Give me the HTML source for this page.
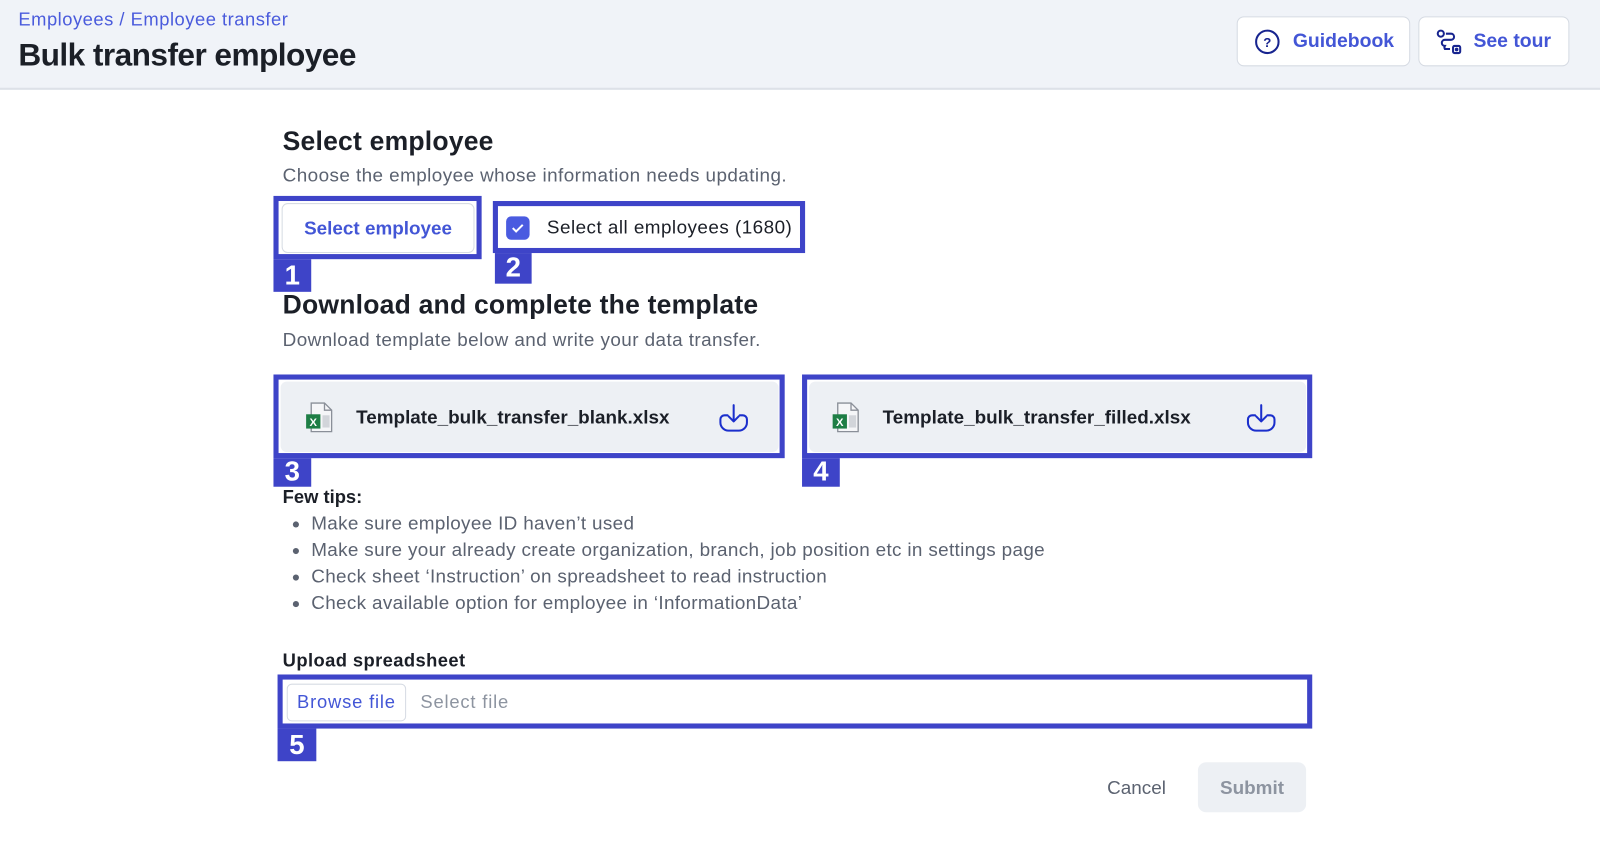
<!DOCTYPE html>
<html><head><meta charset="utf-8">
<style>
*{box-sizing:border-box;margin:0;padding:0}
body{width:1600px;height:852px;background:#fff;font-family:"Liberation Sans",sans-serif;position:relative;overflow:hidden;color:#1b1f27}
.w{position:absolute;left:0;top:0;width:1568px;height:835px;transform:scale(1.0204);transform-origin:0 0}
.a{position:absolute}
.hdr{left:0;top:0;width:1568px;height:88px;background:#f0f3f8;border-bottom:2px solid #dde1e8}
.bc{left:18px;top:9px;font-size:18px;color:#4a5bdc;letter-spacing:0.5px}
.tt{left:18px;top:36px;font-size:31px;font-weight:bold;color:#1b1f27;letter-spacing:-0.55px}
.hb{top:16px;height:49px;background:#fff;border:1.5px solid #d6dbe3;border-radius:7px;color:#4356d6;font-size:19px;font-weight:bold;display:flex;align-items:center}
.ann{border:5px solid #3e44c8}
.lab{background:#3e44c8;color:#fff;font-weight:bold;font-size:27px;text-align:center;line-height:32px}
.h2{font-size:26px;font-weight:bold;color:#1b1f27;letter-spacing:0.2px}
.sub{font-size:18.5px;color:#5b6270;letter-spacing:0.42px}
.tpl{background:#edf0f4;border-radius:6px;display:flex;align-items:center;font-size:18.5px;font-weight:bold;color:#1b1f27}
li{font-size:18.5px;color:#5b6270;line-height:26px;margin-left:28px;letter-spacing:0.33px}
</style></head><body><div class="w">
<div class="a hdr"></div>
<div class="a bc">Employees / Employee transfer</div>
<div class="a tt">Bulk transfer employee</div>
<div class="a hb" style="left:1212px;width:170px;padding-left:16px">
<svg width="26" height="26" viewBox="0 0 26 26"><circle cx="13" cy="13" r="11" fill="none" stroke="#17248f" stroke-width="2"/><text x="13" y="18" font-size="13" font-weight="bold" text-anchor="middle" fill="#17248f" font-family="Liberation Sans">?</text></svg>
<span style="margin-left:12px">Guidebook</span></div>
<div class="a hb" style="left:1390px;width:148px;padding-left:16px">
<svg width="26" height="26" viewBox="0 0 26 26" fill="none" stroke="#17248f" stroke-width="2"><circle cx="5" cy="5" r="3"/><rect x="17" y="17" width="7" height="7" rx="1.5"/><circle cx="20.5" cy="20.5" r="0.8" fill="#17248f"/><path d="M10 5h5a3 3 0 0 1 0 6h-6a3 3 0 0 0 0 6v0a3 3 0 0 0 0 3h5"/></svg>
<span style="margin-left:11px">See tour</span></div>

<div class="a h2" style="left:277px;top:123px">Select employee</div>
<div class="a sub" style="left:277px;top:161px">Choose the employee whose information needs updating.</div>

<div class="a ann" style="left:268px;top:192px;width:204px;height:62px"></div>
<div class="a" style="left:276px;top:199px;width:189px;height:49px;border:1.5px solid #d6dbe3;border-radius:6px;color:#4356d6;font-size:18.5px;font-weight:bold;display:flex;align-items:center;justify-content:center">Select employee</div>
<div class="a lab" style="left:268px;top:254px;width:37px;height:32px">1</div>

<div class="a ann" style="left:483px;top:197px;width:306px;height:51px"></div>
<div class="a" style="left:496px;top:212px;width:23px;height:23px;background:#4a5be0;border-radius:5px"><svg width="23" height="23" viewBox="0 0 23 23"><path d="M6.5 11.5l3.3 3.3 6.5-6.5" fill="none" stroke="#fff" stroke-width="2"/></svg></div>
<div class="a" style="left:536px;top:212px;font-size:18.5px;color:#1b1f27;letter-spacing:0.45px">Select all employees (1680)</div>
<div class="a lab" style="left:485px;top:248px;width:36px;height:30px;line-height:28px">2</div>

<div class="a h2" style="left:277px;top:283px">Download and complete the template</div>
<div class="a sub" style="left:277px;top:322px">Download template below and write your data transfer.</div>

<div class="a ann" style="left:268px;top:367px;width:501px;height:82px"></div>
<div class="a tpl" style="left:275px;top:374px;width:488px;height:69px;padding-left:24px">
<svg width="30" height="32" viewBox="0 0 30 32"><path d="M6 2h13l7 7v21H6z" fill="#f5f6f8" stroke="#8a8f98" stroke-width="1.3"/><path d="M19 2v7h7" fill="none" stroke="#8a8f98" stroke-width="1.3"/><rect x="17" y="14" width="7" height="12" fill="#d2d5da"/><rect x="1" y="13" width="14" height="14" fill="#1e7e45"/><text x="8" y="24.5" font-size="11" font-weight="bold" fill="#fff" text-anchor="middle" font-family="Liberation Sans">X</text></svg>
<span style="margin-left:20px;flex:1">Template_bulk_transfer_blank.xlsx</span>
<svg width="32" height="32" viewBox="0 0 32 32" style="margin-right:28px" fill="none" stroke="#1b2fcc" stroke-width="2" stroke-linecap="round" stroke-linejoin="round"><path d="M10 14H7a4 4 0 0 0-4 4v3a8 8 0 0 0 8 8h10a8 8 0 0 0 8-8v-3a4 4 0 0 0-4-4h-3"/><path d="M16 4v16M11 15l5 5 5-5"/></svg>
</div>
<div class="a lab" style="left:268px;top:449px;width:37px;height:28px;line-height:26px">3</div>

<div class="a ann" style="left:786px;top:367px;width:500px;height:82px"></div>
<div class="a tpl" style="left:793px;top:374px;width:487px;height:69px;padding-left:22px">
<svg width="30" height="32" viewBox="0 0 30 32"><path d="M6 2h13l7 7v21H6z" fill="#f5f6f8" stroke="#8a8f98" stroke-width="1.3"/><path d="M19 2v7h7" fill="none" stroke="#8a8f98" stroke-width="1.3"/><rect x="17" y="14" width="7" height="12" fill="#d2d5da"/><rect x="1" y="13" width="14" height="14" fill="#1e7e45"/><text x="8" y="24.5" font-size="11" font-weight="bold" fill="#fff" text-anchor="middle" font-family="Liberation Sans">X</text></svg>
<span style="margin-left:20px;flex:1">Template_bulk_transfer_filled.xlsx</span>
<svg width="32" height="32" viewBox="0 0 32 32" style="margin-right:28px" fill="none" stroke="#1b2fcc" stroke-width="2" stroke-linecap="round" stroke-linejoin="round"><path d="M10 14H7a4 4 0 0 0-4 4v3a8 8 0 0 0 8 8h10a8 8 0 0 0 8-8v-3a4 4 0 0 0-4-4h-3"/><path d="M16 4v16M11 15l5 5 5-5"/></svg>
</div>
<div class="a lab" style="left:786px;top:449px;width:37px;height:28px;line-height:26px">4</div>

<div class="a" style="left:277px;top:477px;font-size:18px;font-weight:bold">Few tips:</div>
<ul class="a" style="left:277px;top:500px;list-style:disc;white-space:nowrap">
<li>Make sure employee ID haven’t used</li>
<li>Make sure your already create organization, branch, job position etc in settings page</li>
<li>Check sheet ‘Instruction’ on spreadsheet to read instruction</li>
<li>Check available option for employee in ‘InformationData’</li>
</ul>

<div class="a" style="left:277px;top:637px;font-size:18px;font-weight:bold;letter-spacing:0.4px">Upload spreadsheet</div>
<div class="a ann" style="left:272px;top:661px;width:1014px;height:53px"></div>
<div class="a" style="left:281px;top:670px;width:117px;height:37px;border:1.5px solid #d6dbe3;border-radius:5px;color:#4356d6;font-size:18px;display:flex;align-items:center;justify-content:center;letter-spacing:0.8px">Browse file</div>
<div class="a" style="left:412px;top:678px;font-size:18px;color:#8d94a0;letter-spacing:0.8px">Select file</div>
<div class="a lab" style="left:272px;top:714px;width:38px;height:32px">5</div>

<div class="a" style="left:1085px;top:761px;font-size:18.5px;color:#5b6270">Cancel</div>
<div class="a" style="left:1174px;top:747px;width:106px;height:49px;background:#edf0f4;border-radius:8px;color:#8d94a0;font-size:18.5px;font-weight:bold;display:flex;align-items:center;justify-content:center">Submit</div>
</div></body></html>
